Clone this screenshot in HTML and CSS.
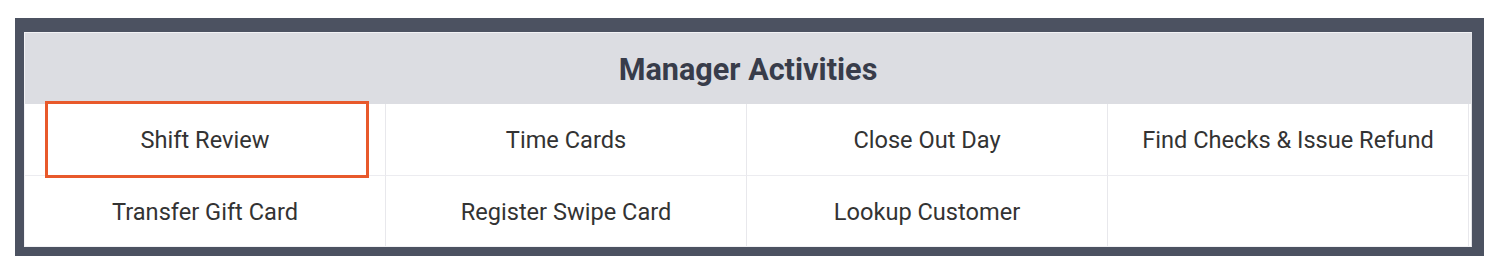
FILE: index.html
```html
<!DOCTYPE html>
<html>
<head>
<meta charset="utf-8">
<link rel="stylesheet" href="styles.css">
</head>
<body>
<div class="frame">
  <div class="panel">
    <div class="panel-header">Manager Activities</div>
    <div class="grid">
      <div class="cell focused"><span class="btn">Shift Review</span></div>
      <div class="cell"><span class="btn">Time Cards</span></div>
      <div class="cell"><span class="btn">Close Out Day</span></div>
      <div class="cell"><span class="btn">Find Checks &amp; Issue Refund</span></div>
      <div class="cell"><span class="btn">Transfer Gift Card</span></div>
      <div class="cell"><span class="btn">Register Swipe Card</span></div>
      <div class="cell"><span class="btn">Lookup Customer</span></div>
      <div class="cell"></div>
    </div>
  </div>
</div>
</body>
</html>
```

FILE: styles.css
```css
html, body {
  margin: 0;
  padding: 0;
  background: #ffffff;
}
body {
  font-family: Roboto, "Liberation Sans", sans-serif;
}
.frame {
  margin: 18px 0 0 15px;
  width: 1469px;
  height: 238px;
  box-sizing: border-box;
  padding: 14px 12px 9px 9px;
  background: #4c5261;
}
.panel {
  height: 215px;
  box-sizing: border-box;
  background: #ffffff;
  border: 1px solid #f2f2f5;
  border-right-color: #e2e2e7;
  display: flex;
  flex-direction: column;
}
.panel-header {
  height: 71px;
  flex: none;
  background: #dcdde2;
  color: #383c4a;
  font-weight: 700;
  font-size: 30.6px;
  display: flex;
  align-items: center;
  justify-content: center;
  padding-top: 2px;
  box-sizing: border-box;
}
.grid {
  flex: 1;
  display: grid;
  grid-template-columns: repeat(4, 361px);
  grid-template-rows: 72px 1fr;
}
.cell {
  position: relative;
  border-right: 1px solid #e8e8ec;
  border-bottom: 1px solid #ececf0;
  display: flex;
  align-items: stretch;
  justify-content: center;
}
.cell:nth-child(n+5) {
  border-bottom: none;
}
.btn {
  flex: 1;
  display: flex;
  align-items: center;
  justify-content: center;
  font-size: 23.6px;
  color: #333333;
  padding-top: 1px;
}
.cell.focused::after {
  content: "";
  position: absolute;
  left: 20px;
  right: 16px;
  top: -3px;
  bottom: -3px;
  border: 3px solid #e8592b;
}
```
